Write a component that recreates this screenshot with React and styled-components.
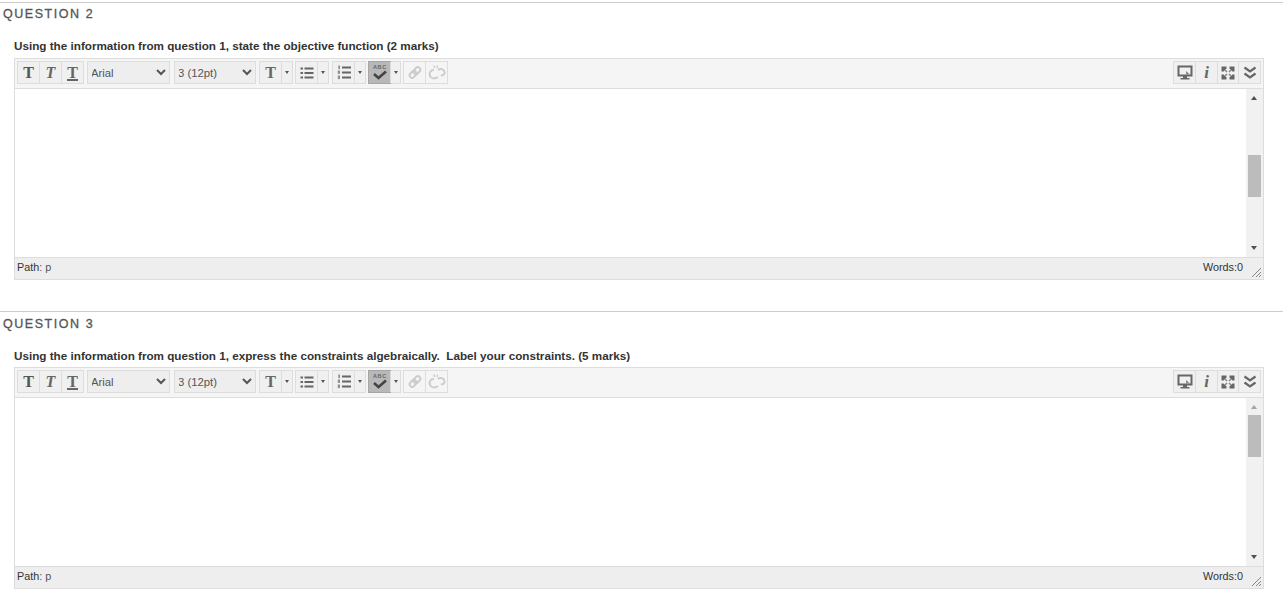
import styled, { createGlobalStyle } from "styled-components";

const GlobalStyle = createGlobalStyle`
  html, body {
    margin: 0;
    padding: 0;
    background: #fff;
    font-family: "Liberation Sans", Arial, sans-serif;
  }
`;

const Page = styled.div`
  width: 1283px;
  padding-top: 2px;
`;

const Question = styled.section`
  border-top: 1px solid #ccc;
  height: 309.4px;
  box-sizing: border-box;
`;

const Heading = styled.h2`
  margin: 0;
  padding: 4.4px 0 0 3px;
  height: 20px;
  box-sizing: border-box;
  font-size: 12.5px;
  line-height: 15px;
  font-weight: 400;
  -webkit-text-stroke: 0.3px #555;
  letter-spacing: 1.55px;
  color: #555;
`;

const Prompt = styled.p`
  margin: 0;
  padding: 16.4px 0 0 14px;
  height: 35px;
  box-sizing: border-box;
  font-size: 11.7px;
  line-height: 14px;
  font-weight: 700;
  color: #333;
`;

const Editor = styled.div`
  width: 1250px;
  margin-left: 14px;
  border: 1px solid #ddd;
  box-sizing: border-box;
  height: 222px;
  display: flex;
  flex-direction: column;
`;

const Toolbar = styled.div`
  height: 30px;
  flex: none;
  box-sizing: border-box;
  border-bottom: 1px solid #ddd;
  background: #f5f5f5;
  padding: 2px 2px 0 2px;
  display: flex;
  align-items: flex-start;
`;

const Group = styled.div`
  display: flex;
  height: 23px;
  box-sizing: border-box;
  border: 1px solid #ddd;
  margin-right: ${(p) => p.$gap ?? 2}px;
  margin-left: ${(p) => (p.$push ? "auto" : "0")};
  background: ${(p) => (p.$flat ? "transparent" : "#f0f0f0")};
`;

const Btn = styled.div`
  width: ${(p) => p.$w ?? 22}px;
  height: 100%;
  box-sizing: border-box;
  display: flex;
  align-items: center;
  justify-content: center;
  background: ${(p) => (p.$active ? "#b8b8b8" : "transparent")};
  border-left: ${(p) => (p.$first ? "none" : "1px solid #ddd")};
  outline: ${(p) => (p.$active ? "1px solid #a6a6a6" : "none")};
`;

const Glyph = styled.span`
  font-family: "Liberation Serif", "Times New Roman", serif;
  font-size: 16px;
  line-height: 16px;
  font-weight: 700;
  font-style: ${(p) => (p.$italic ? "italic" : "normal")};
  color: ${(p) => p.$color ?? "#555"};
  border-bottom: ${(p) => (p.$under ? "2px solid #666" : "none")};
  height: ${(p) => (p.$under ? "14px" : "auto")};
`;

const Caret = styled.i`
  width: 0;
  height: 0;
  border-left: 2.5px solid transparent;
  border-right: 2.5px solid transparent;
  border-top: 3px solid #555;
`;

const Select = styled.select`
  width: ${(p) => p.$w}px;
  height: 23px;
  margin-right: ${(p) => p.$gap}px;
  box-sizing: border-box;
  padding: 0;
  text-indent: -1px;
  border: 1px solid #ddd;
  border-radius: 0;
  background-color: #eee;
  color: #555;
  font-family: "Liberation Sans", Arial, sans-serif;
  font-size: 11.3px;
  outline: none;
`;

const Body = styled.div`
  flex: 1;
  min-height: 0;
  display: flex;
  background: #fff;
`;

const Text = styled.div`
  flex: 1;
`;

const Scrollbar = styled.div`
  width: 17px;
  flex: none;
  background: #f1f1f1;
  position: relative;
`;

const Arrow = styled.i`
  position: absolute;
  left: 5px;
  ${(p) => (p.$down ? "bottom: 7px;" : "top: 7px;")}
  width: 0;
  height: 0;
  border-left: 3.5px solid transparent;
  border-right: 3.5px solid transparent;
  ${(p) => (p.$down ? "border-top" : "border-bottom")}: 4px solid ${(p) => p.$color};
`;

const Thumb = styled.div`
  position: absolute;
  left: 2px;
  top: ${(p) => p.$top}px;
  width: 13px;
  height: 42px;
  background: #bcbcbc;
`;

const Status = styled.div`
  height: 22px;
  flex: none;
  box-sizing: border-box;
  border-top: 1px solid #ddd;
  background: #eee;
  display: flex;
  align-items: center;
  justify-content: space-between;
  padding: 0 4px 4px 2px;
  font-size: 10.8px;
  color: #333;
  position: relative;
`;

const Path = styled.span`
  span { color: #555; }
`;

const Words = styled.span`
  margin-right: 16px;
`;

const Grip = styled.svg`
  position: absolute;
  right: 1px;
  bottom: 1px;
`;

const Icon = ({ children, w = 16, h = 16 }) => (
  <svg width={w} height={h} viewBox={`0 0 ${w} ${h}`}>{children}</svg>
);

const ListIcon = () => (
  <Icon w={14} h={14}>
    <g fill="#666">
      <rect x="0.5" y="1.5" width="2.5" height="2" />
      <rect x="0.5" y="6" width="2.5" height="2" />
      <rect x="0.5" y="10.5" width="2.5" height="2" />
      <rect x="4.5" y="1.5" width="9" height="2" />
      <rect x="4.5" y="6" width="9" height="2" />
      <rect x="4.5" y="10.5" width="9" height="2" />
    </g>
  </Icon>
);

const NumberedIcon = () => (
  <Icon w={14} h={15}>
    <g fill="#666">
      <rect x="1.5" y="0.5" width="1.2" height="3.6" />
      <rect x="0.8" y="5.5" width="2.2" height="3.4" opacity="0.7" />
      <rect x="0.8" y="10.5" width="2.2" height="3.6" opacity="0.7" />
      <rect x="5" y="1.5" width="9" height="2" />
      <rect x="5" y="6.5" width="9" height="2" />
      <rect x="5" y="11.5" width="9" height="2" />
    </g>
  </Icon>
);

const SpellIcon = () => (
  <Icon w={18} h={19}>
    <text x="2" y="6" fontFamily="Liberation Sans, sans-serif" fontSize="5.5" fontWeight="700" letterSpacing="0.6" fill="#666">ABC</text>
    <path d="M3 11 L7.5 15 L15 8.5" fill="none" stroke="#444" strokeWidth="2.6" />
  </Icon>
);

const LinkIcon = () => (
  <Icon w={14} h={15}>
    <g fill="none" stroke="#ccc" strokeWidth="2" transform="rotate(-45 7 7.5)">
      <rect x="0.5" y="5" width="7.5" height="5" rx="2.5" />
      <rect x="6" y="5" width="7.5" height="5" rx="2.5" />
    </g>
  </Icon>
);

const UnlinkIcon = () => (
  <Icon w={18} h={15}>
    <g fill="none" stroke="#ccc" strokeWidth="2">
      <path d="M6 5 C2 5 1 8 2 11 C3 14 7 14 10 12" />
      <path d="M10 5 C12 3 16 4 16.5 7 C17 9 15 11 13 10" />
      <path d="M6 0.5 L6.5 3 M9.5 0.5 L9 3" strokeWidth="1.4" />
    </g>
  </Icon>
);

const MonitorIcon = () => (
  <Icon w={16} h={15}>
    <path d="M1.5 1.5 H14.5 V10.5 H1.5 Z" fill="#f0f0f0" stroke="#666" strokeWidth="2" />
    <path d="M9 6 L13 9.5 H9 Z" fill="#888" />
    <rect x="6" y="11" width="4" height="2" fill="#666" />
    <rect x="3.5" y="13" width="9" height="1.5" fill="#666" />
  </Icon>
);

const ExpandIcon = () => (
  <Icon w={14} h={14}>
    <g fill="#666">
      <path d="M0.5 0.5 H5.5 V2.5 L4 4 L2.5 5.5 H0.5 Z" />
      <path d="M13.5 0.5 H8.5 V2.5 L10 4 L11.5 5.5 H13.5 Z" />
      <path d="M0.5 13.5 H5.5 V11.5 L4 10 L2.5 8.5 H0.5 Z" />
      <path d="M13.5 13.5 H8.5 V11.5 L10 10 L11.5 8.5 H13.5 Z" />
    </g>
    <path d="M4 4 L6 6 M10 4 L8 6 M4 10 L6 8 M10 10 L8 8" stroke="#888" strokeWidth="1.6" />
  </Icon>
);

const ChevronsIcon = () => (
  <Icon w={14} h={14}>
    <path d="M1.5 1.5 L7 5.5 L12.5 1.5 M1.5 7.5 L7 11.5 L12.5 7.5" fill="none" stroke="#666" strokeWidth="2.2" />
  </Icon>
);

const InfoGlyph = styled(Glyph)`
  font-size: 17px;
  font-style: italic;
  color: #666;
`;

function EditorToolbar() {
  return (
    <Toolbar>
      <Group $gap={3}>
        <Btn $first $w={21}><Glyph>T</Glyph></Btn>
        <Btn><Glyph $italic $color="#666">T</Glyph></Btn>
        <Btn><Glyph $under $color="#666">T</Glyph></Btn>
      </Group>
      <Select $w={83} $gap={4} defaultValue="Arial">
        <option>Arial</option>
      </Select>
      <Select $w={82} $gap={3} defaultValue="3 (12pt)">
        <option>3 (12pt)</option>
      </Select>
      <Group>
        <Btn $first $w={21}><Glyph $color="#666">T</Glyph></Btn>
        <Btn $w={11}><Caret /></Btn>
      </Group>
      <Group $gap={3}>
        <Btn $first $w={21}><ListIcon /></Btn>
        <Btn $w={11}><Caret /></Btn>
      </Group>
      <Group>
        <Btn $first $w={21}><NumberedIcon /></Btn>
        <Btn $w={11}><Caret /></Btn>
      </Group>
      <Group>
        <Btn $first $active $w={21}><SpellIcon /></Btn>
        <Btn $w={10}><Caret /></Btn>
      </Group>
      <Group $flat>
        <Btn $first $w={21}><LinkIcon /></Btn>
        <Btn><UnlinkIcon /></Btn>
      </Group>
      <Group $push $gap={0}>
        <Btn $first $w={21}><MonitorIcon /></Btn>
        <Btn><InfoGlyph>i</InfoGlyph></Btn>
        <Btn $w={21}><ExpandIcon /></Btn>
        <Btn><ChevronsIcon /></Btn>
      </Group>
    </Toolbar>
  );
}

function EditorBox({ thumbTop, upColor }) {
  return (
    <Editor>
      <EditorToolbar />
      <Body>
        <Text />
        <Scrollbar>
          <Arrow $color={upColor} />
          <Thumb $top={thumbTop} />
          <Arrow $down $color="#505050" />
        </Scrollbar>
      </Body>
      <Status>
        <Path>Path<span>: p</span></Path>
        <Words>Words:0</Words>
        <Grip width="12" height="12" viewBox="0 0 12 12">
          <path d="M2 11 L11 2 M6 11 L11 6 M9 11 L11 9" stroke="#888" strokeWidth="1" />
        </Grip>
      </Status>
    </Editor>
  );
}

const questions = [
  {
    id: 2,
    prompt: "Using the information from question 1, state the objective function (2 marks)",
    thumbTop: 66,
    upColor: "#505050",
  },
  {
    id: 3,
    prompt: "Using the information from question 1, express the constraints algebraically.\u00A0 Label your constraints. (5 marks)",
    thumbTop: 17,
    upColor: "#a3a3a3",
  },
];

export default function App() {
  return (
    <>
      <GlobalStyle />
      <Page>
        {questions.map((q) => (
          <Question key={q.id}>
            <Heading>QUESTION {q.id}</Heading>
            <Prompt>{q.prompt}</Prompt>
            <EditorBox thumbTop={q.thumbTop} upColor={q.upColor} />
          </Question>
        ))}
      </Page>
    </>
  );
}
